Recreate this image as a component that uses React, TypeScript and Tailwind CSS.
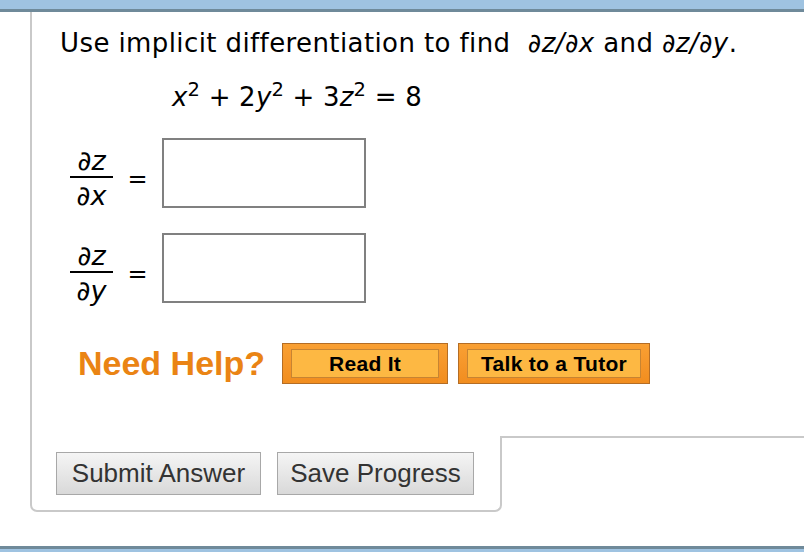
import React from "react";

const verdana = { fontFamily: '"DejaVu Sans", Verdana, sans-serif' };

function Frac({ num, den }: { num: string; den: string }) {
  return (
    <div className="flex flex-col items-center w-[43px] mt-[11px]">
      <span className="italic text-[27px] leading-[24px] h-[24px]">{num}</span>
      <div className="w-full h-[2px] bg-black mt-[3px]" />
      <span className="italic text-[27px] leading-[24px] h-[24px] mt-[6px]">{den}</span>
    </div>
  );
}

function AnswerRow({ den, className }: { den: string; className?: string }) {
  return (
    <div className={"flex items-start h-[70px] pl-[10px] " + (className ?? "")}>
      <Frac num="∂z" den={den} />
      <span className="w-[49px] text-center text-[24px] leading-[24px] mt-[29px]">=</span>
      <div className="w-[204px] h-[70px] border-2 border-[#808080] bg-white" />
    </div>
  );
}

function OrangeButton({ label, width }: { label: string; width: string }) {
  return (
    <div
      className={
        "h-[41px] border border-[#b46d25] bg-gradient-to-b from-[#f9a033] to-[#f18d1f] px-[8px] py-[5px] " +
        width
      }
    >
      <div
        className="h-full border border-[#c78432] bg-[#fdb843] flex items-center justify-center text-[21px] font-bold text-black tracking-[0.3px]"
        style={{ fontFamily: '"Liberation Sans", Arial, sans-serif' }}
      >
        {label}
      </div>
    </div>
  );
}

function GrayButton({ label, width }: { label: string; width: string }) {
  return (
    <div
      className={
        "h-[43px] border border-[#a8a8a8] bg-gradient-to-b from-[#f5f5f5] to-[#d9d9d9] flex items-center justify-center text-[26px] text-[#333333] " +
        width
      }
      style={{ fontFamily: '"Liberation Sans", Helvetica, Arial, sans-serif' }}
    >
      {label}
    </div>
  );
}

export default function App() {
  return (
    <div className="w-[804px] h-[552px] bg-white flex flex-col overflow-hidden text-black" style={verdana}>
      <div className="h-[9px] bg-[#9fc3e1]" />
      <div className="h-[3px] bg-[#6f8a9a]" />

      <div className="ml-[30px] h-[424px] border-l-2 border-[#c9c9c9] pl-[28px] pt-[16px]">
        <p className="text-[26px] leading-[30px] whitespace-pre tracking-[0.4px]">
          Use implicit differentiation to find{"  "}
          <span className="italic">∂z/∂x</span> and <span className="italic">∂z/∂y</span>.
        </p>

        <p className="text-[26px] leading-[30px] mt-[24px] pl-[112px] tracking-[0.2px]">
          <span className="italic">x</span>
          <sup>2</sup> + 2<span className="italic">y</span>
          <sup>2</sup> + 3<span className="italic">z</span>
          <sup>2</sup> = 8
        </p>

        <AnswerRow den="∂x" className="mt-[26px]" />
        <AnswerRow den="∂y" className="mt-[25px]" />

        <div className="flex items-center h-[41px] mt-[40px] pl-[18px]">
          <span
            className="text-[34px] font-bold text-[#ea8414] leading-[41px] mr-[17px]"
            style={{ fontFamily: '"Liberation Sans", Arial, sans-serif' }}
          >
            Need Help?
          </span>
          <OrangeButton label="Read It" width="w-[166px]" />
          <div className="w-[10px]" />
          <OrangeButton label="Talk to a Tutor" width="w-[192px]" />
        </div>
      </div>

      <div className="flex h-[76px]">
        <div className="ml-[30px] w-[472px] border-l-2 border-r-2 border-b-2 border-[#c9c9c9] rounded-b-[7px] flex items-start gap-[16px] pl-[24px] pt-[16px]">
          <GrayButton label="Submit Answer" width="w-[205px]" />
          <GrayButton label="Save Progress" width="w-[197px]" />
        </div>
        <div className="flex-1 border-t-2 border-[#c9c9c9]" />
      </div>

      <div className="flex-1" />
      <div className="h-[3px] bg-[#6f8a9a]" />
      <div className="h-[3px] bg-[#9fc3e1]" />
    </div>
  );
}
